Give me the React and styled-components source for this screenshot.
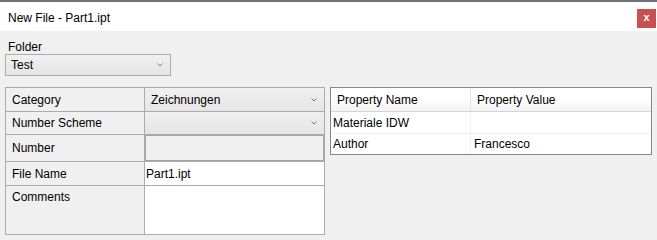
import React from "react";
import styled, { createGlobalStyle } from "styled-components";

const GlobalStyle = createGlobalStyle`
  html, body { margin: 0; padding: 0; background: #f0f0f0; }
  body { font-family: "Liberation Sans", Arial, sans-serif; font-size: 12px; color: #000; }
`;

const Window = styled.div`
  width: 657px;
  height: 240px;
  display: flex;
  flex-direction: column;
  background: #f0f0f0;
  overflow: hidden;
`;

const TitleBar = styled.div`
  height: 29px;
  border-top: 2px solid #6e7179;
  background: #fff;
  display: flex;
  align-items: flex-start;
  justify-content: space-between;
  padding-left: 8px;
  padding-right: 1px;
`;

const TitleText = styled.span`
  line-height: 14px;
  margin-top: 9px;
`;

const CloseButton = styled.div`
  width: 19px;
  height: 19px;
  margin-top: 7px;
  background: #c75050;
  color: #fff;
  font-weight: bold;
  font-size: 11px;
  display: flex;
  align-items: center;
  justify-content: center;
  line-height: 1;
  padding-bottom: 2px;
  box-sizing: border-box;
`;

const Body = styled.div`
  padding: 9px 5px 0 5px;
  display: flex;
  flex-direction: column;
`;

const FieldLabel = styled.div`
  line-height: 14px;
  padding-left: 3px;
`;

const Combo = styled.div`
  box-sizing: border-box;
  width: ${(p) => p.$width || "100%"};
  height: ${(p) => p.$height || "100%"};
  border: ${(p) => (p.$bordered ? "1px solid #acacac" : "none")};
  background: linear-gradient(#f0f0f0, #e5e5e5);
  display: flex;
  align-items: center;
  justify-content: space-between;
  padding: 0 7px 0 ${(p) => p.$pad || "5px"};
`;

const Chevron = () => (
  <svg width="6" height="4" viewBox="0 0 6 4">
    <path d="M0.5 0.5 L3 3 L5.5 0.5" fill="none" stroke="#7a7a7a" strokeWidth="1" />
  </svg>
);

const Panels = styled.div`
  margin-top: 11px;
  display: flex;
  gap: 5px;
  align-items: flex-start;
`;

const PropGrid = styled.div`
  width: 320px;
  box-sizing: border-box;
  display: grid;
  grid-template-columns: 138px 179px;
  grid-template-rows: 23px 22px 26px 23px 48px;
  gap: 1px;
  padding: 1px;
  background: #ababab;
`;

const LabelCell = styled.div`
  background: #f0f0f0;
  display: flex;
  align-items: ${(p) => (p.$top ? "flex-start" : "center")};
  padding: ${(p) => (p.$top ? "4px" : "0")} 0 0 6px;
  line-height: 14px;
`;

const ValueCell = styled.div`
  background: ${(p) => p.$bg || "#fff"};
  display: flex;
  align-items: center;
  padding-left: ${(p) => p.$pad || "0"};
  line-height: 14px;
  box-shadow: ${(p) => (p.$sunken ? "inset 0 0 0 1px #a5a5a5" : "none")};
`;

const Table = styled.div`
  width: 322px;
  box-sizing: border-box;
  border: 1px solid #828790;
  background: #fff;
  display: flex;
  flex-direction: column;
`;

const HeaderRow = styled.div`
  display: grid;
  grid-template-columns: 140px 1fr;
  height: 24px;
  box-sizing: border-box;
  border-bottom: 1px solid #d5d5d5;
  background: linear-gradient(#ffffff 0%, #ffffff 45%, #f3f3f3 100%);
`;

const HeaderCell = styled.div`
  display: flex;
  align-items: center;
  padding-left: 6px;
  line-height: 14px;
  border-right: ${(p) => (p.$sep ? "1px solid #e3e3e3" : "none")};
`;

const BodyRow = styled.div`
  display: grid;
  grid-template-columns: 140px 1fr;
  height: ${(p) => p.$h}px;
  box-sizing: border-box;
  border-bottom: ${(p) => (p.$line ? "1px solid #f0f0f0" : "none")};
`;

const BodyCell = styled.div`
  display: flex;
  align-items: center;
  padding-left: ${(p) => p.$pad}px;
  line-height: 14px;
  border-right: ${(p) => (p.$sep ? "1px solid #f0f0f0" : "none")};
`;

export default function App() {
  return (
    <>
      <GlobalStyle />
      <Window>
        <TitleBar>
          <TitleText>New File - Part1.ipt</TitleText>
          <CloseButton>x</CloseButton>
        </TitleBar>
        <Body>
          <FieldLabel>Folder</FieldLabel>
          <Combo $bordered $width="166px" $height="22px">
            <span>Test</span>
            <Chevron />
          </Combo>
          <Panels>
            <PropGrid>
              <LabelCell>Category</LabelCell>
              <ValueCell $bg="#f0f0f0">
                <Combo $pad="6px">
                  <span>Zeichnungen</span>
                  <Chevron />
                </Combo>
              </ValueCell>
              <LabelCell>Number Scheme</LabelCell>
              <ValueCell $bg="#f0f0f0">
                <Combo $pad="6px">
                  <span></span>
                  <Chevron />
                </Combo>
              </ValueCell>
              <LabelCell>Number</LabelCell>
              <ValueCell $bg="#f0f0f0" $sunken />
              <LabelCell>File Name</LabelCell>
              <ValueCell $pad="1px">Part1.ipt</ValueCell>
              <LabelCell $top>Comments</LabelCell>
              <ValueCell />
            </PropGrid>
            <Table>
              <HeaderRow>
                <HeaderCell $sep>Property Name</HeaderCell>
                <HeaderCell>Property Value</HeaderCell>
              </HeaderRow>
              <BodyRow $h={22} $line>
                <BodyCell $pad={2} $sep>Materiale IDW</BodyCell>
                <BodyCell $pad={3}></BodyCell>
              </BodyRow>
              <BodyRow $h={20}>
                <BodyCell $pad={2} $sep>Author</BodyCell>
                <BodyCell $pad={3}>Francesco</BodyCell>
              </BodyRow>
            </Table>
          </Panels>
        </Body>
      </Window>
    </>
  );
}
